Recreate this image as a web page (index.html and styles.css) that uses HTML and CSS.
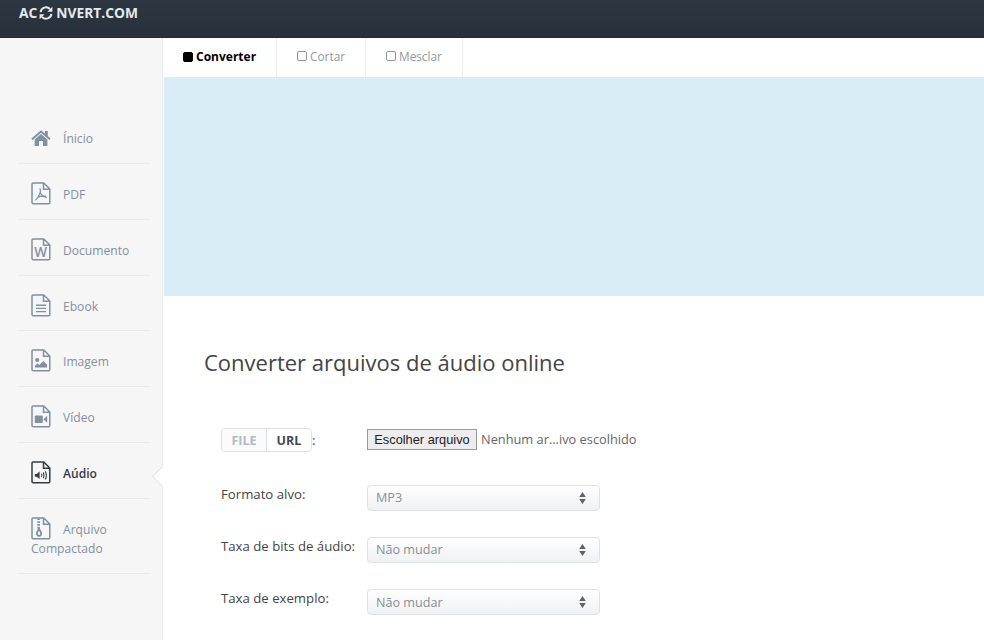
FILE: index.html
```html
<!DOCTYPE html>
<html lang="pt">
<head>
    <meta charset="UTF-8">
    <meta name="viewport" content="width=device-width, initial-scale=1.0">
    <title>Converter arquivos de áudio online</title>
    <link rel="stylesheet" href="styles.css">
</head>
<body>
    <svg class="sprite" width="0" height="0">
        <symbol id="page" viewBox="0 0 20 23">
            <path d="M1.9 1H12.8L18.8 7V20.6Q18.8 21.8 17.6 21.8H2.2Q1 21.8 1 20.6V2Q1 1 1.9 1ZM12.5 1.2V7.2H18.6" fill="none" stroke="currentColor" stroke-width="1.5"/>
        </symbol>
    </svg>

    <header class="navbar">
        <a class="logo" href="#"><span>AC</span><svg class="logo-icon" viewBox="0 0 14 14"><path d="M1.6 6.2A5.4 5.4 0 0 1 11 3.2M12.4 7.8A5.4 5.4 0 0 1 3 10.8" fill="none" stroke="currentColor" stroke-width="2"/><path d="M13.4 .8V5.8H8.4ZM.6 13.2V8.2H5.6Z" fill="currentColor"/></svg><span>NVERT.COM</span></a>
    </header>

    <div class="wrapper">
        <nav class="sidebar">
            <ul class="menu">
                <li><a href="#"><svg class="icon" viewBox="0 0 20 23"><path d="M10 8L16.4 13.4V20H12V15H8V20H3.6V13.4Z" fill="currentColor"/><path d="M1 13.2L10 5.6L19 13.2" fill="none" stroke="currentColor" stroke-width="2"/><path d="M14 5H16.8V11L14 8.6Z" fill="currentColor"/></svg>Ínicio</a></li>
                <li><a href="#"><svg class="icon" viewBox="0 0 20 23"><use href="#page"/><path d="M8.6 6.5Q9.8 6.8 9.2 10.5Q7.5 15.5 4.4 18.4M9.2 10.5Q10.5 14 15.8 15.6M6.6 15.4Q10.5 13.6 15 14.2" fill="none" stroke="currentColor" stroke-width="1.2"/></svg>PDF</a></li>
                <li><a href="#"><svg class="icon" viewBox="0 0 20 23"><use href="#page"/><text class="word-mark" x="9.7" y="18.8">W</text></svg>Documento</a></li>
                <li><a href="#"><svg class="icon" viewBox="0 0 20 23"><use href="#page"/><path d="M5 11.2H15M5 14.4H15M5 17.6H15" stroke="currentColor" stroke-width="1.4"/></svg>Ebook</a></li>
                <li><a href="#"><svg class="icon" viewBox="0 0 20 23"><use href="#page"/><circle cx="6.2" cy="11" r="2.1" fill="currentColor"/><path d="M4 18.5V16.5L6.5 14.6L8.3 16L12.3 12L16 15.8V18.5Z" fill="currentColor"/></svg>Imagem</a></li>
                <li><a href="#"><svg class="icon" viewBox="0 0 20 23"><use href="#page"/><rect x="3.8" y="10.6" width="8" height="7.4" rx="1" fill="currentColor"/><path d="M12.4 14.2L16.2 10.8V17.8Z" fill="currentColor"/></svg>Vídeo</a></li>
                <li class="active"><a href="#"><svg class="icon" viewBox="0 0 20 23"><use href="#page"/><path d="M3.8 13H5.6L8.6 10.6V18L5.6 15.8H3.8Z" fill="currentColor"/><path d="M10.4 12.6Q11.8 14.3 10.4 16M12.3 11.4Q14 14.3 12.3 17.2M14.2 10.2Q16.6 14.3 14.2 18.4" fill="none" stroke="currentColor" stroke-width="1.1"/></svg>Aúdio</a></li>
                <li class="tall"><a href="#"><svg class="icon" viewBox="0 0 20 23"><use href="#page"/><path d="M7.6 1.5V12" stroke="currentColor" stroke-width="2.6" stroke-dasharray="1.6 1.2"/><path d="M8 11.6L10 15.6Q10.4 18.8 8.2 18.8Q5.6 18.8 6 15.6Z" fill="none" stroke="currentColor" stroke-width="1.8"/></svg>Arquivo Compactado</a></li>
            </ul>
        </nav>

        <main class="content">
            <div class="tabs">
                <a class="tab active" href="#"><i class="box"></i>Converter</a>
                <a class="tab" href="#"><i class="box"></i>Cortar</a>
                <a class="tab" href="#"><i class="box"></i>Mesclar</a>
            </div>
            <div class="banner"></div>

            <section class="form">
                <h1>Converter arquivos de áudio online</h1>
                <div class="row first">
                    <div class="label"><span class="toggle"><button class="off">FILE</button><button>URL</button></span>:</div>
                    <div class="file"><button class="file-btn">Escolher arquivo</button><span>Nenhum ar...ivo escolhido</span></div>
                </div>
                <div class="row">
                    <div class="label">Formato alvo:</div>
                    <div class="select"><span>MP3</span><svg class="arrows" viewBox="0 0 7 12"><path d="M3.5 0L6.8 5H.2ZM3.5 12L.2 7H6.8Z"/></svg></div>
                </div>
                <div class="row">
                    <div class="label">Taxa de bits de áudio:</div>
                    <div class="select"><span>Não mudar</span><svg class="arrows" viewBox="0 0 7 12"><path d="M3.5 0L6.8 5H.2ZM3.5 12L.2 7H6.8Z"/></svg></div>
                </div>
                <div class="row">
                    <div class="label">Taxa de exemplo:</div>
                    <div class="select"><span>Não mudar</span><svg class="arrows" viewBox="0 0 7 12"><path d="M3.5 0L6.8 5H.2ZM3.5 12L.2 7H6.8Z"/></svg></div>
                </div>
            </section>
        </main>
    </div>
</body>
</html>
```
FILE: styles.css
```css
* {
    box-sizing: border-box;
}
body {
    font-family: 'Open Sans', sans-serif;
    font-size: 12.6px;
    background: #fff;
    margin: 0;
    color: #444;
    height: 640px;
    overflow: hidden;
}
a {
    color: inherit;
    text-decoration: none;
}
.sprite {
    display: block;
}
.navbar {
    height: 38px;
    background: linear-gradient(#2c3742, #28303a);
    border-bottom: 1px solid #222a33;
    padding: 4px 0 0 19px;
}
.logo {
    display: flex;
    align-items: center;
    height: 17px;
    color: #e4e9ee;
    font-size: 13.8px;
    font-weight: 700;
}
.logo-icon {
    width: 14px;
    height: 14px;
    margin: 0 3px 0 2px;
}
.wrapper {
    display: flex;
    height: 602px;
}
.sidebar {
    width: 163px;
    flex: none;
    background: #f6f6f6;
    border-right: 1px solid #e9ecf0;
    padding-top: 70px;
}
.menu {
    list-style: none;
    margin: 0;
    padding: 0 12px 0 18px;
}
.menu li {
    position: relative;
    height: 55.85px;
    border-bottom: 1px solid #e9eaec;
    padding: 21px 0 0 13px;
    font-size: 12.1px;
    line-height: 19px;
    color: #8390a0;
}
.menu li.tall {
    height: 75px;
}
.menu .active {
    color: #343c46;
    font-weight: 600;
}
/* notch that points at the current page */
.menu .active::after {
    content: "";
    position: absolute;
    right: -20px;
    top: 26px;
    width: 14px;
    height: 14px;
    background: #fff;
    border-left: 1px solid #dfe3e7;
    border-bottom: 1px solid #dfe3e7;
    transform: rotate(45deg);
}
.icon {
    width: 20px;
    height: 23px;
    margin: -10px 12px -4px 0;
    vertical-align: -2px;
}
.word-mark {
    font-size: 13.5px;
    font-weight: 600;
    text-anchor: middle;
    fill: currentColor;
}
.content {
    flex: 1;
}
.tabs {
    display: flex;
    height: 39px;
}
.tab {
    display: flex;
    align-items: center;
    padding: 0 20px 3px;
    border-right: 1px solid #eceef0;
    font-size: 11.8px;
    color: #8f99a3;
}
.tab.active {
    padding-bottom: 2px;
    font-size: 12px;
    color: #000;
    font-weight: 700;
}
.box {
    width: 10px;
    height: 10px;
    border: 1px solid #8f99a3;
    border-radius: 2px;
    margin-right: 3px;
}
.tab.active .box {
    background: #000;
    border-color: #000;
}
.banner {
    height: 219px;
    margin-left: 1px;
    background: #d9edf7;
}
.form {
    padding: 48px 0 0 41px;
}
h1 {
    margin: 0 0 49px;
    font-size: 22px;
    line-height: 36px;
    font-weight: 400;
    color: #444;
}
.row {
    display: flex;
    height: 52.3px;
    padding-left: 17px;
}
.row.first {
    height: 55.5px;
}
.label {
    width: 146px;
    display: flex;
    align-items: center;
    height: 18px;
    font-size: 13.2px;
    white-space: nowrap;
}
.first .label {
    height: 22px;
}
.toggle {
    display: flex;
    width: 91px;
    height: 24px;
    border: 1px solid #dde1e4;
    border-radius: 4px;
}
.toggle button {
    flex: 1;
    border: 0;
    padding: 0;
    background: #fff;
    border-radius: 4px;
    font: 700 12.5px 'Open Sans', sans-serif;
    color: #444b53;
}
.toggle .off {
    background: #fafafb;
    border-right: 1px solid #dde1e4;
    border-radius: 4px 0 0 4px;
    color: #b3b9c0;
}
.file {
    display: flex;
    align-items: center;
    height: 20px;
    gap: 4px;
    font-size: 12.8px;
    color: #666;
}
.file-btn {
    width: 110px;
    height: 21px;
    padding: 0;
    border: 1px solid #999;
    background: #ededed;
    font: 12.8px 'Liberation Sans', sans-serif;
    color: #222;
}
.select {
    display: flex;
    align-items: center;
    justify-content: space-between;
    width: 233px;
    height: 26px;
    padding: 0 13px 0 8px;
    border: 1px solid #dfe2e5;
    border-radius: 4px;
    background: linear-gradient(#fff, #eff1f4);
    color: #8a8e93;
}
.arrows {
    width: 7px;
    height: 12px;
    fill: #606468;
}
```
